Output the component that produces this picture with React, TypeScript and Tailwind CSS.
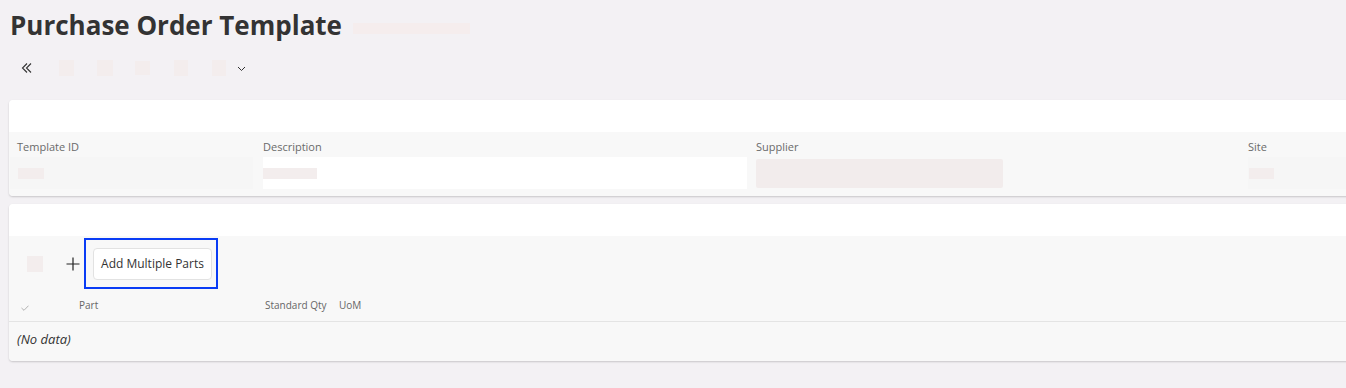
import React from "react";

const font = { fontFamily: '"Open Sans", "Noto Sans", sans-serif' };

function Sk({ className }: { className: string }) {
  return <div className={"bg-[#f3eded] " + className} />;
}

export default function App() {
  return (
    <div
      className="w-full h-[388px] overflow-hidden bg-[#f3f1f4] text-[#333]"
      style={font}
    >
      {/* Title */}
      <div className="flex items-center h-[50px] pl-[10px]">
        <h1 className="text-[26px] font-bold leading-none text-[#333]">
          Purchase Order Template
        </h1>
        <Sk className="ml-[11px] mt-[6px] w-[117px] h-[11px] bg-[#f5eded]" />
      </div>

      {/* Toolbar */}
      <div className="flex items-center h-[36px] pl-[21px]">
        <svg width="12" height="12" viewBox="0 0 12 12" fill="none" stroke="#333" strokeWidth="1.1">
          <path d="M6 1.5 L1.5 6 L6 10.5" />
          <path d="M10 1.5 L5.5 6 L10 10.5" />
        </svg>
        <Sk className="ml-[26px] w-[15px] h-[16px] bg-[#f3eded]" />
        <Sk className="ml-[23px] w-[16px] h-[16px] bg-[#f3eded]" />
        <Sk className="ml-[22px] w-[15px] h-[14px] bg-[#f3eded]" />
        <Sk className="ml-[24px] w-[14px] h-[16px] bg-[#f3eded]" />
        <Sk className="ml-[24px] w-[14px] h-[16px] bg-[#f3eded]" />
        <svg className="ml-[11px] mt-[2px]" width="9" height="6" viewBox="0 0 9 6" fill="none" stroke="#333" strokeWidth="1">
          <path d="M1 1 L4.5 4.5 L8 1" />
        </svg>
      </div>

      {/* Card 1 */}
      <div className="ml-[9px] mr-[-20px] mt-[14px] rounded-[4px] overflow-hidden shadow-[0_1px_2px_rgba(0,0,0,0.18)]">
        <div className="h-[32px] bg-white" />
        <div className="bg-[#f8f8f8] h-[64px] flex pt-[7px] text-[11px] text-[#6a6a6a]">
          <div className="w-[246px] flex flex-col">
            <div className="pl-[8px] h-[16px] leading-[16px]">Template ID</div>
            <div className="mt-[2px] ml-[1px] w-[243px] h-[32px] bg-[#f6f6f6] flex items-center pl-[8px]">
              <Sk className="w-[26px] h-[11px]" />
            </div>
          </div>
          <div className="w-[493px] flex flex-col pl-[8px]">
            <div className="h-[16px] leading-[16px]">Description</div>
            <div className="mt-[2px] w-[484px] h-[32px] bg-white flex items-center">
              <Sk className="w-[54px] h-[11px]" />
            </div>
          </div>
          <div className="w-[492px] flex flex-col pl-[8px]">
            <div className="h-[16px] leading-[16px]">Supplier</div>
            <div className="mt-[4px] w-[247px] h-[29px] bg-[#f2ecec] rounded-[2px]" />
          </div>
          <div className="flex-1 flex flex-col pl-[8px]">
            <div className="h-[16px] leading-[16px]">Site</div>
            <div className="mt-[2px] h-[32px] bg-[#f6f6f6] flex items-center pl-[1px]">
              <Sk className="w-[25px] h-[11px]" />
            </div>
          </div>
        </div>
      </div>

      {/* Card 2 */}
      <div className="ml-[9px] mr-[-20px] mt-[8px] rounded-[4px] overflow-hidden shadow-[0_1px_2px_rgba(0,0,0,0.18)]">
        <div className="h-[32px] bg-white" />
        <div className="bg-[#f8f8f8]">
          <div className="pt-[2px] flex items-center h-[53px]">
            <Sk className="ml-[18px] w-[16px] h-[16px] bg-[#f3eded]" />
            <svg className="ml-[23px]" width="14" height="14" viewBox="0 0 14 14" fill="none" stroke="#222" strokeWidth="1.2">
              <path d="M7 0.5 V13.5 M0.5 7 H13.5" />
            </svg>
            <div className="ml-[4px] border-2 border-[#0a3cf5] pl-[7px] pr-[4px] pt-[8px] pb-[7px]">
              <div className="h-[32px] w-[119px] bg-white border border-[#e2e2e2] rounded-[4px] flex items-center justify-center text-[12px] text-[#333]">
                Add Multiple Parts
              </div>
            </div>
          </div>
          <div className="h-[33px] flex items-center border-b border-[#e4e4e4] text-[10px] text-[#666]">
            <svg className="ml-[12px] mt-[6px]" width="8" height="6" viewBox="0 0 8 6" fill="none" stroke="#aaa" strokeWidth="0.9">
              <path d="M0.5 3 L3 5.3 L7.5 0.7" />
            </svg>
            <div className="ml-[50px] w-[186px]">Part</div>
            <div className="w-[74px]">Standard Qty</div>
            <div>UoM</div>
          </div>
          <div className="h-[39px] pl-[8px] pt-[8px] text-[13px] italic leading-[18px] text-[#333]">
            (No data)
          </div>
        </div>
      </div>
    </div>
  );
}
